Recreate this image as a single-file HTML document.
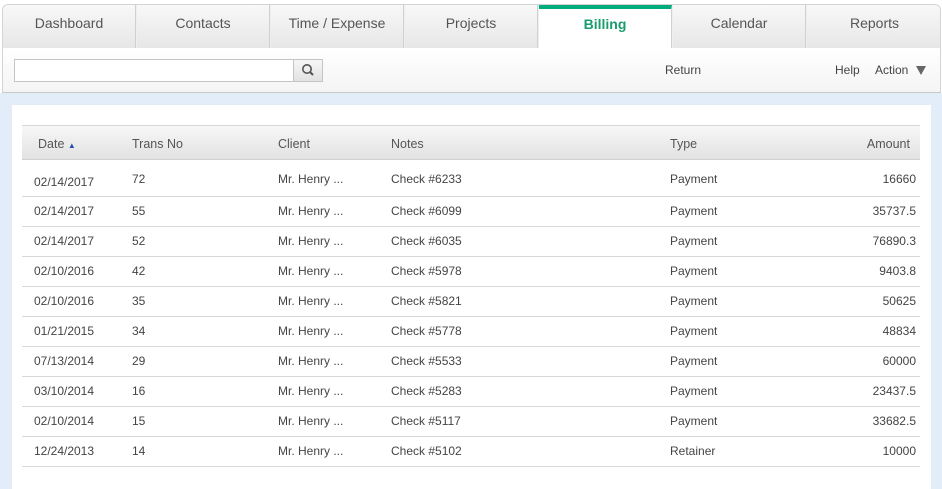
<!DOCTYPE html>
<html><head><style>
*{margin:0;padding:0;box-sizing:border-box}
body{width:942px;height:489px;overflow:hidden;background:#fff;font-family:"Liberation Sans","DejaVu Sans",sans-serif;color:#444;position:relative}
.tabs{position:absolute;left:2px;top:4px;width:939px;height:44px;border:1px solid #d4d4d4;border-bottom:none;border-radius:6px 6px 0 0;overflow:hidden;background:#eee}
.tab{position:absolute;top:0;height:44px;width:133px;background:linear-gradient(#f8f8f8,#e6e6e6);border-right:1px solid #d0d0d0;text-align:center;line-height:36px;font-size:14px;color:#555}
.tab.act{background:#fff;color:#1a9c6c;font-weight:bold;border-top:4px solid #00ac7c;line-height:30px}
.bar{position:absolute;left:2px;top:48px;width:939px;height:45px;background:linear-gradient(#fff,#f4f4f4);border:1px solid #d4d4d4;border-top:none;border-bottom:1px solid #c8c8c8}
.search{position:absolute;left:11px;top:11px;width:280px;height:23px;border:1px solid #c4c4c4;background:#fff}
.sbtn{position:absolute;left:290px;top:11px;width:30px;height:23px;border:1px solid #c4c4c4;background:linear-gradient(#f6f6f6,#e2e2e2)}
.lnk{position:absolute;top:15px;font-size:12px;color:#444}
.bg{position:absolute;left:0;top:93px;width:942px;height:396px;background:#e3ecf9}
.panel{position:absolute;left:12px;top:105px;width:919px;height:384px;background:#fff}
.hd{position:absolute;left:22px;top:125px;width:898px;height:35px;background:linear-gradient(#f7f7f7,#e2e2e2);border-top:1px solid #d8d8d8;border-bottom:1px solid #d0d0d0}
.c{position:absolute;font-size:12px;color:#444;white-space:nowrap}
.h{font-size:12.5px;color:#555}
.line{position:absolute;left:22px;width:898px;height:1px;background:#d8d8d8}
</style></head><body>
<div class="tabs">
<div class="tab" style="left:0">Dashboard</div>
<div class="tab" style="left:134px">Contacts</div>
<div class="tab" style="left:268px">Time / Expense</div>
<div class="tab" style="left:402px">Projects</div>
<div class="tab act" style="left:536px">Billing</div>
<div class="tab" style="left:670px">Calendar</div>
<div class="tab" style="left:804px;width:135px;border-right:none">Reports</div>
</div>
<div class="bar">
<div class="search"></div>
<div class="sbtn"><svg width="28" height="21" viewBox="0 0 28 21"><circle cx="13" cy="9" r="4.2" fill="none" stroke="#555" stroke-width="1.6"/><line x1="16" y1="12" x2="19" y2="15" stroke="#555" stroke-width="2"/></svg></div>
<div class="lnk" style="left:662px">Return</div>
<div class="lnk" style="left:832px">Help</div>
<div class="lnk" style="left:872px">Action</div>
<svg style="position:absolute;left:913px;top:18px" width="10" height="9"><polygon points="0,0 10,0 5,9" fill="#666"/></svg>
</div>
<div class="bg"></div>
<div class="panel"></div>
<div class="hd"></div>
<div class="c h" style="left:38px;top:137px">Date <span style="font-size:8px;color:#2a4fb0">▲</span></div>
<div class="c h" style="left:132px;top:137px">Trans No</div>
<div class="c h" style="left:278px;top:137px">Client</div>
<div class="c h" style="left:391px;top:137px">Notes</div>
<div class="c h" style="left:670px;top:137px">Type</div>
<div class="c h" style="right:32px;top:137px">Amount</div>
<div id="rows"></div>
<script>
var d=[["02/14/2017","72","6233","Payment","16660"],["02/14/2017","55","6099","Payment","35737.5"],["02/14/2017","52","6035","Payment","76890.3"],["02/10/2016","42","5978","Payment","9403.8"],["02/10/2016","35","5821","Payment","50625"],["01/21/2015","34","5778","Payment","48834"],["07/13/2014","29","5533","Payment","60000"],["03/10/2014","16","5283","Payment","23437.5"],["02/10/2014","15","5117","Payment","33682.5"],["12/24/2013","14","5102","Retainer","10000"]];
var h="";
for(var i=0;i<d.length;i++){var y=i==0?172:204+(i-1)*30;var ly=i==0?196:226+(i-1)*30;var r=d[i];
h+='<div class="c" style="left:22px;width:84px;text-align:center;top:'+(i==0?y+3:y)+'px">'+r[0]+'</div>';
h+='<div class="c" style="left:132px;top:'+y+'px">'+r[1]+'</div>';
h+='<div class="c" style="left:278px;top:'+y+'px">Mr. Henry ...</div>';
h+='<div class="c" style="left:391px;top:'+y+'px">Check #'+r[2]+'</div>';
h+='<div class="c" style="left:670px;top:'+y+'px">'+r[3]+'</div>';
h+='<div class="c" style="right:26px;top:'+y+'px">'+r[4]+'</div>';
h+='<div class="line" style="top:'+ly+'px"></div>';}
document.getElementById("rows").innerHTML=h;
</script>
</body></html>
